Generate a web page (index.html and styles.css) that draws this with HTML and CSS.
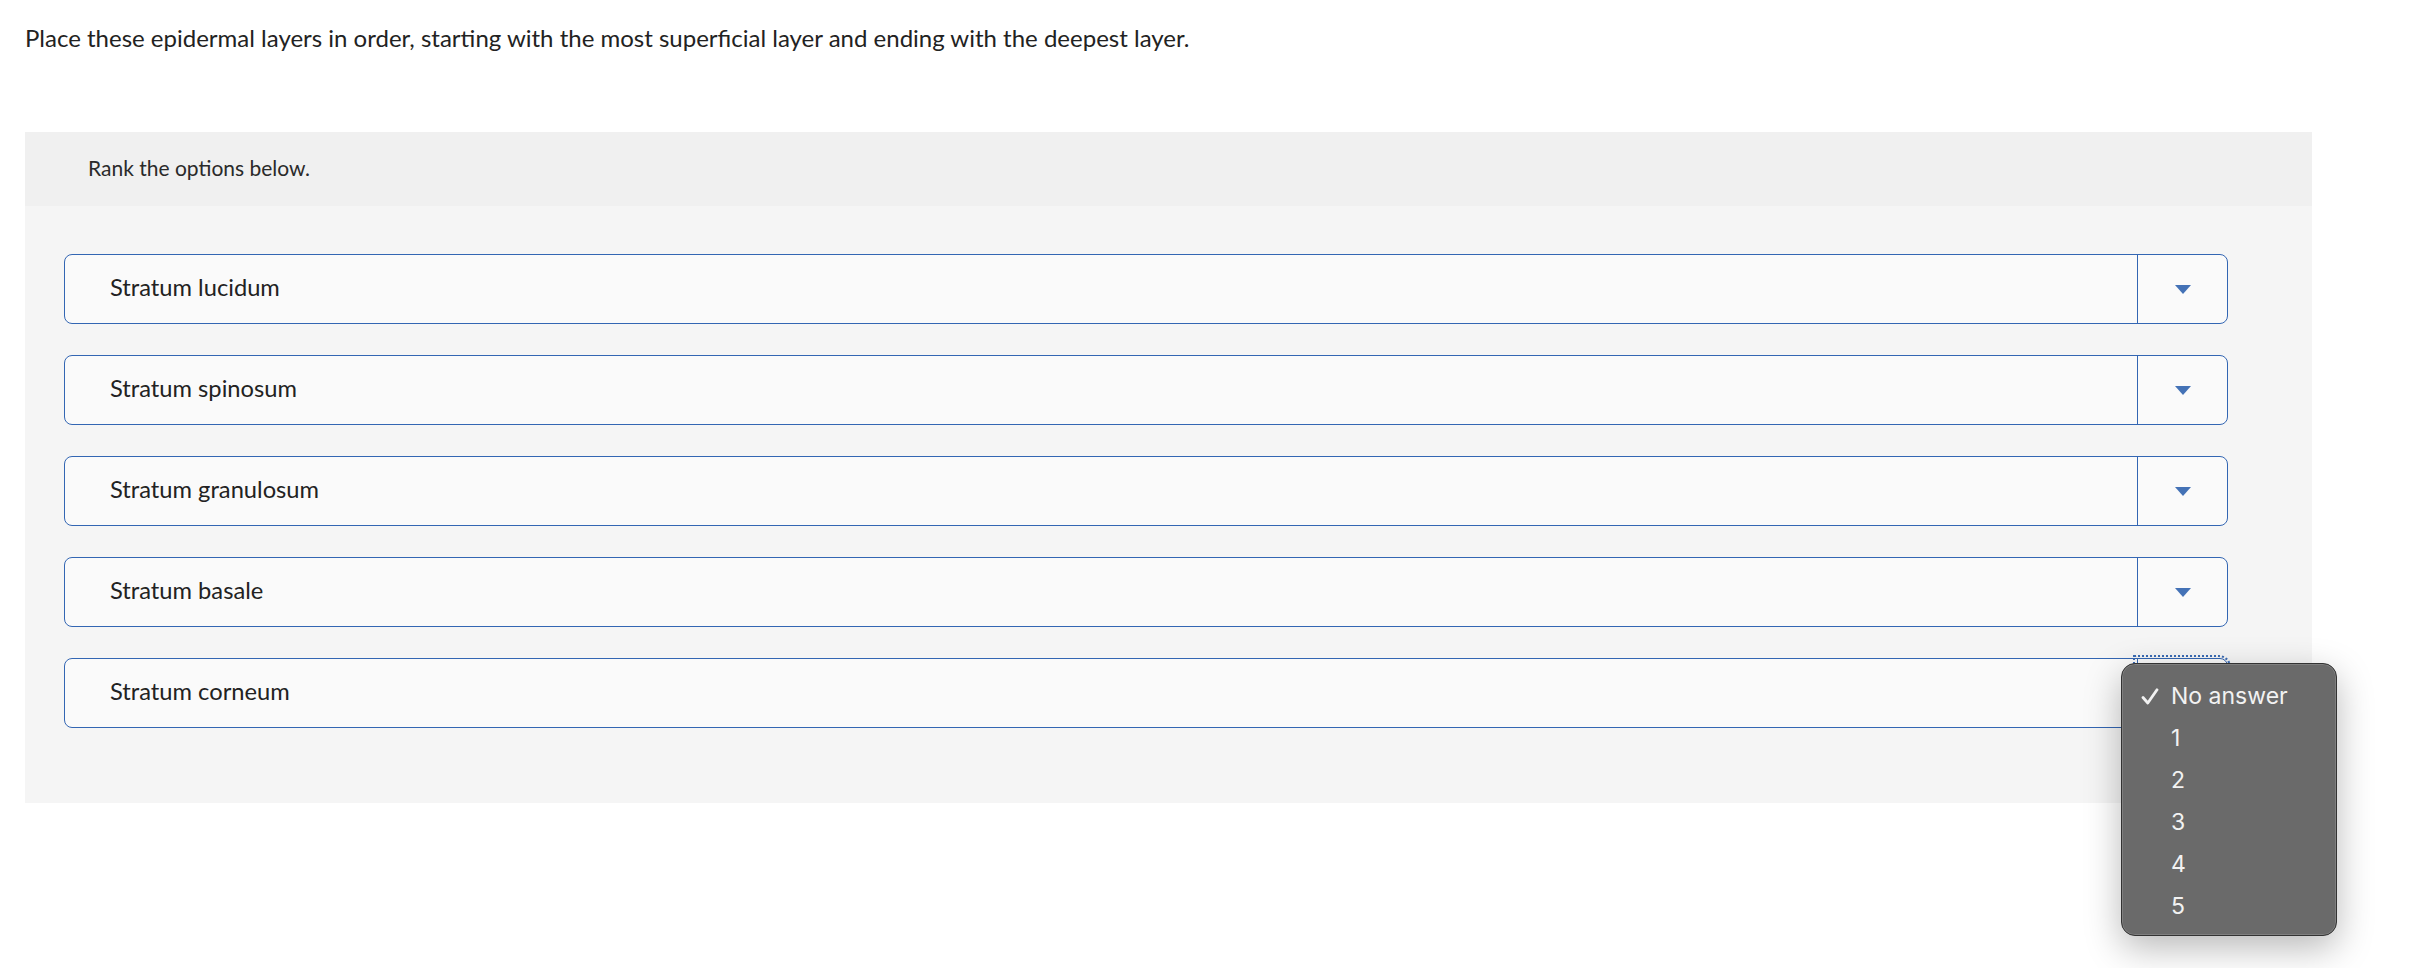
FILE: index.html
```html
<!DOCTYPE html>
<html lang="en">
<head>
<meta charset="utf-8">
<title>Rank the epidermal layers</title>
<link rel="stylesheet" href="styles.css">
</head>
<body>
<main class="page">
  <p class="prompt">Place these epidermal layers in order, starting with the most superficial layer and ending with the deepest layer.</p>
  <section class="panel">
    <header class="panel-head">Rank the options below.</header>
    <div class="panel-body">
      <div class="rank-row">
        <span class="rank-label">Stratum lucidum</span>
        <span class="rank-select"><span class="caret"></span></span>
      </div>
      <div class="rank-row">
        <span class="rank-label">Stratum spinosum</span>
        <span class="rank-select"><span class="caret"></span></span>
      </div>
      <div class="rank-row">
        <span class="rank-label">Stratum granulosum</span>
        <span class="rank-select"><span class="caret"></span></span>
      </div>
      <div class="rank-row">
        <span class="rank-label">Stratum basale</span>
        <span class="rank-select"><span class="caret"></span></span>
      </div>
      <div class="rank-row">
        <span class="rank-label">Stratum corneum</span>
        <span class="rank-select is-focused"><span class="caret"></span></span>
      </div>
    </div>
  </section>
  <ul class="popup-menu">
    <li class="popup-item is-checked"><svg class="check" width="18" height="17" viewBox="0 0 18 17"><path d="M2 9.5 L6.8 15 L16 1.8" fill="none" stroke="#f2f2f2" stroke-width="2.8" stroke-linecap="round" stroke-linejoin="round"/></svg>No answer</li>
    <li class="popup-item">1</li>
    <li class="popup-item">2</li>
    <li class="popup-item">3</li>
    <li class="popup-item">4</li>
    <li class="popup-item">5</li>
  </ul>
</main>
</body>
</html>
```
FILE: styles.css
```css
html, body {
  margin: 0;
  padding: 0;
  background: #ffffff;
}

body {
  min-height: 968px;
}

.page {
  position: relative;
  min-height: 968px;
  box-sizing: border-box;
  padding: 23px 0 0 25px;
  font-family: Lato, "Open Sans", sans-serif;
  color: #222222;
}

.prompt {
  margin: 0 0 79px;
  font-size: 24px;
  line-height: 30px;
}

.panel {
  width: 2287px;
  background: #f5f5f5;
}

.panel-head {
  height: 74px;
  box-sizing: border-box;
  display: flex;
  align-items: center;
  padding: 0 0 4px 63px;
  background: #f0f0f0;
  font-size: 21px;
  color: #2a2a2a;
}

.panel-body {
  display: flex;
  flex-direction: column;
  gap: 31px;
  padding: 48px 84px 75px 39px;
}

.rank-row {
  display: flex;
  height: 70px;
  box-sizing: border-box;
  border: 1px solid #3366b3;
  border-radius: 8px;
  background: #fafafa;
}

.rank-label {
  flex: 1;
  display: flex;
  align-items: center;
  padding: 0 0 4px 45px;
  font-size: 23.7px;
  color: #222222;
}

.rank-select {
  width: 89px;
  display: flex;
  align-items: center;
  justify-content: center;
  border-left: 1px solid #3366b3;
}

.rank-select.is-focused {
  outline: 2px dotted #3a6bb4;
  outline-offset: 2px;
  border-radius: 0 8px 8px 0;
}

.caret {
  width: 0;
  height: 0;
  border-left: 8.5px solid transparent;
  border-right: 8.5px solid transparent;
  border-top: 9px solid #4472b6;
}

.popup-menu {
  position: absolute;
  left: 2121px;
  top: 663px;
  width: 216px;
  height: 273px;
  box-sizing: border-box;
  margin: 0;
  padding: 11px 0 0;
  list-style: none;
  background: #6a6a6a;
  border: 1px solid #333333;
  border-radius: 14px;
  box-shadow: inset 0 0 0 1px rgba(255, 255, 255, 0.14), 0 12px 36px rgba(0, 0, 0, 0.28);
  font-family: Inter, "Liberation Sans", sans-serif;
  font-size: 23px;
  color: #f2f2f2;
}

.popup-item {
  position: relative;
  height: 42px;
  line-height: 42px;
  padding-left: 49px;
}

.check {
  position: absolute;
  left: 19px;
  top: 13px;
}
```
